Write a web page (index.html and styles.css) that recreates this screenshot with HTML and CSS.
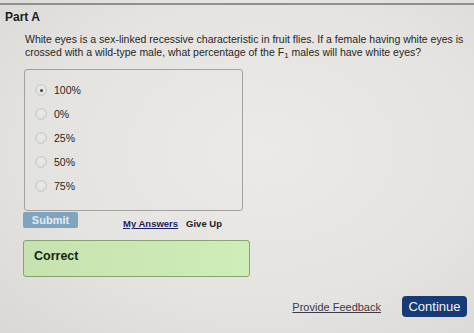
FILE: index.html
```
<!DOCTYPE html>
<html>
<head>
<meta charset="utf-8">
<link rel="stylesheet" href="styles.css">
</head>
<body>
<div class="page">
  <div class="rule"></div>
  <h2 class="part">Part A</h2>
  <p class="question">White eyes is a sex-linked recessive characteristic in fruit flies. If a female having white eyes is<br>crossed with a wild-type male, what percentage of the F<sub>1</sub> males will have white eyes?</p>
  <div class="choices">
    <div class="choice"><span class="radio checked"></span><span class="label">100%</span></div>
    <div class="choice"><span class="radio"></span><span class="label">0%</span></div>
    <div class="choice"><span class="radio"></span><span class="label">25%</span></div>
    <div class="choice"><span class="radio"></span><span class="label">50%</span></div>
    <div class="choice"><span class="radio"></span><span class="label">75%</span></div>
  </div>
  <div class="actions">
    <span class="submit">Submit</span>
    <a class="my-answers">My Answers</a>
    <span class="give-up">Give Up</span>
  </div>
  <div class="correct">Correct</div>
  <div class="footer">
    <a class="feedback">Provide Feedback</a>
    <span class="continue">Continue</span>
  </div>
</div>
</body>
</html>
```
FILE: styles.css
```
html, body {
  margin: 0;
  padding: 0;
}
body {
  width: 474px;
  height: 333px;
  overflow: hidden;
  background: radial-gradient(ellipse at 55% 45%, #ebeae6 0%, #e4e3df 60%, #d9d8d4 100%);
  font-family: "Liberation Sans", Arial, sans-serif;
  color: #222;
}
.page {
  display: flex;
  flex-direction: column;
}
.rule {
  margin-top: 3px;
  height: 2px;
  background: #8f8f8f;
}
.part {
  margin: 5px 0 0 5px;
  font-size: 12px;
  line-height: 14px;
  font-weight: bold;
  color: #1c1c1c;
}
.question {
  margin: 9px 0 0 25px;
  font-size: 10.5px;
  line-height: 13px;
  color: #262626;
  white-space: nowrap;
}
.question sub {
  font-size: 8px;
  line-height: 0;
  vertical-align: -2px;
}
.choices {
  margin: 10px 0 0 24px;
  width: 217px;
  height: 132px;
  border: 1px solid #a2a2a0;
  border-radius: 3px;
  padding-top: 8px;
  box-sizing: content-box;
  display: flex;
  flex-direction: column;
}
.choice {
  height: 24px;
  display: flex;
  align-items: center;
  padding-left: 10px;
}
.radio {
  width: 10px;
  height: 10px;
  border-radius: 50%;
  border: 1px solid #c9c9c7;
  background: radial-gradient(circle at 50% 40%, #ededeb 0%, #d8d8d6 100%);
  margin-right: 7px;
  position: relative;
}
.radio.checked::after {
  content: "";
  position: absolute;
  left: 3.5px;
  top: 3.5px;
  width: 3px;
  height: 3px;
  border-radius: 50%;
  background: #444;
}
.label {
  font-size: 10.5px;
  color: #262626;
}
.actions {
  display: flex;
  align-items: center;
  margin: 0 0 0 23px;
  height: 17px;
}
.submit {
  width: 55px;
  height: 16px;
  background: #7fa4bf;
  color: #e4edf3;
  font-weight: bold;
  font-size: 11px;
  line-height: 16px;
  text-align: center;
  border-radius: 2px;
}
.my-answers {
  margin-left: 45px;
  margin-top: 8px;
  font-size: 9.5px;
  font-weight: bold;
  color: #1f1f5e;
  text-decoration: underline;
}
.give-up {
  margin-left: 8px;
  margin-top: 8px;
  font-size: 9.5px;
  font-weight: bold;
  color: #222;
}
.correct {
  margin: 12px 0 0 23px;
  height: 35px;
  border: 1px solid #84a570;
  border-radius: 3px;
  background: linear-gradient(to right, #c6e2b0, #cfedb8);
  font-weight: bold;
  font-size: 12.5px;
  line-height: 31px;
  padding-left: 10px;
  box-sizing: content-box;
  width: 215px;
  color: #17240f;
}
.footer {
  display: flex;
  justify-content: flex-end;
  align-items: center;
  margin-top: 19px;
  padding-right: 7px;
}
.feedback {
  font-size: 11px;
  color: #3b3b4b;
  text-decoration: underline;
  margin-right: 21px;
}
.continue {
  width: 65px;
  height: 21px;
  background: #173b74;
  color: #f2f4f8;
  font-size: 13px;
  line-height: 21px;
  text-align: center;
  border-radius: 4px;
}
```
